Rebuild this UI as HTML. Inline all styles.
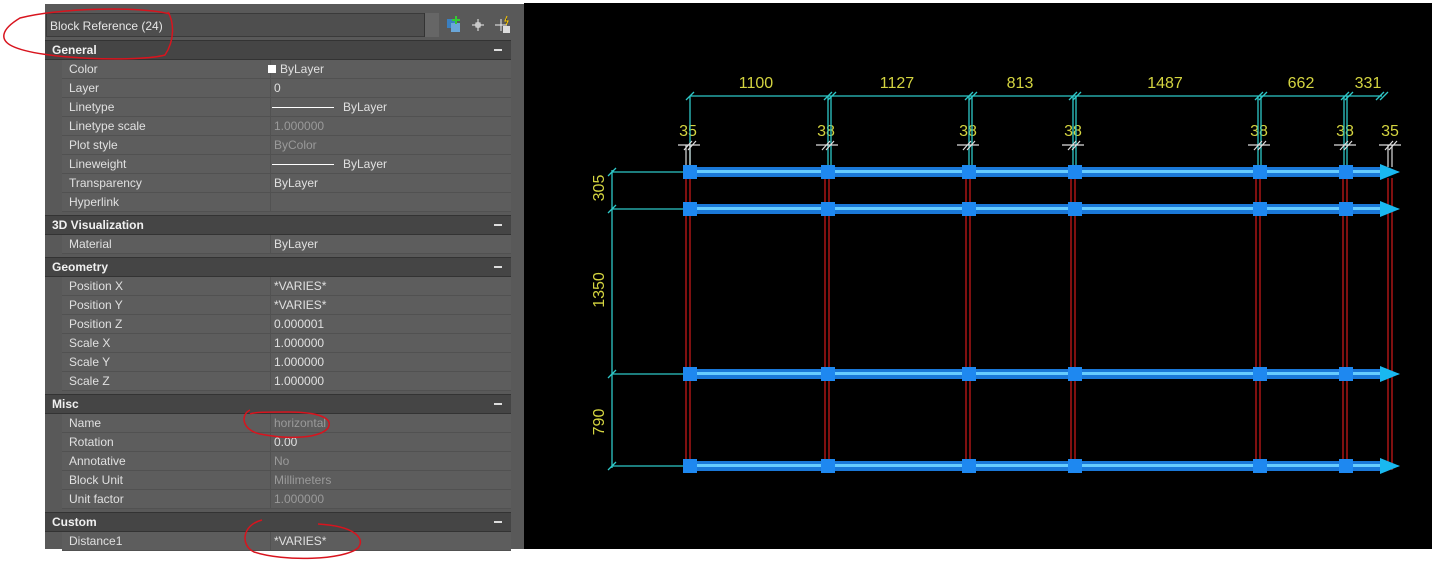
<!DOCTYPE html><html><head><style>
body{margin:0;width:1432px;height:562px;background:#fff;position:relative;overflow:hidden;font-family:"Liberation Sans",sans-serif;}
#panel{position:absolute;left:45px;top:4px;width:479px;height:545px;background:#595959;}
.cb{position:absolute;left:1px;top:9px;width:392px;height:24px;background:#4e4e4e;border:1px solid #3a3a3a;color:#e6e6e6;font-size:12px;line-height:24px;padding-left:3px;box-sizing:border-box;}
.dd{position:absolute;left:379px;top:9px;width:14px;height:24px;background:#666;border-left:1px solid #333;}
.h{position:absolute;left:0;width:466px;height:20px;background:#454545;border-top:1px solid #333;border-bottom:1px solid #333;box-sizing:border-box;color:#f0f0f0;font-weight:bold;font-size:12px;line-height:18px;padding-left:7px;}
.h:after{content:"";position:absolute;right:9px;top:8px;width:8px;height:2px;background:#ddd;}
.r{position:absolute;left:17px;width:449px;height:19px;border-bottom:1px solid #515151;box-sizing:border-box;font-size:12px;line-height:19px;color:#e0e0e0;background:#5d5d5d;}
.r span{position:absolute;left:7px;}
.r b{font-weight:normal;position:absolute;left:212px;}
.r i{position:absolute;left:208px;top:0;bottom:0;border-left:1px solid #525252;}
.g{color:#9a9a9a!important;}
#cad{position:absolute;left:524px;top:3px;width:908px;height:546px;background:#000;}
</style></head><body>
<div id="panel">
<div class="cb">Block Reference (24)</div><div class="dd"></div>
<svg style="position:absolute;left:400px;top:10px" width="70" height="22"><rect x="2" y="5" width="9" height="9" fill="#3a7fc0"/><rect x="6" y="9" width="9" height="9" fill="#6aa6d8"/><path d="M11 2v8M7 6h8" stroke="#3c3" stroke-width="2"/><path d="M27 11h12M33 5v12" stroke="#eee"/><rect x="31" y="9" width="4" height="4" fill="none" stroke="#eee"/><path d="M50 11h12M56 5v12" stroke="#eee"/><rect x="58" y="12" width="7" height="7" fill="#ddd"/><path d="M62 2l-2 5h3l-2 4" stroke="#fc0"/></svg>
<div class="h" style="top:36px">General</div>
<div class="r" style="top:56px"><span>Color</span><i></i><b style="left:218px">ByLayer</b><div style="position:absolute;left:206px;top:5px;width:8px;height:8px;background:#fff"></div></div>
<div class="r" style="top:75px"><span>Layer</span><i></i><b>0</b></div>
<div class="r" style="top:94px"><span>Linetype</span><i></i><b style="left:281px">ByLayer</b><div style="position:absolute;left:210px;top:9px;width:62px;height:1px;background:#fff"></div></div>
<div class="r" style="top:113px"><span>Linetype scale</span><i></i><b class="g">1.000000</b></div>
<div class="r" style="top:132px"><span>Plot style</span><i></i><b class="g">ByColor</b></div>
<div class="r" style="top:151px"><span>Lineweight</span><i></i><b style="left:281px">ByLayer</b><div style="position:absolute;left:210px;top:9px;width:62px;height:1px;background:#fff"></div></div>
<div class="r" style="top:170px"><span>Transparency</span><i></i><b>ByLayer</b></div>
<div class="r" style="top:189px"><span>Hyperlink</span><i></i></div>
<div class="h" style="top:211px">3D Visualization</div>
<div class="r" style="top:231px"><span>Material</span><i></i><b>ByLayer</b></div>
<div class="h" style="top:253px">Geometry</div>
<div class="r" style="top:273px"><span>Position X</span><i></i><b>*VARIES*</b></div>
<div class="r" style="top:292px"><span>Position Y</span><i></i><b>*VARIES*</b></div>
<div class="r" style="top:311px"><span>Position Z</span><i></i><b>0.000001</b></div>
<div class="r" style="top:330px"><span>Scale X</span><i></i><b>1.000000</b></div>
<div class="r" style="top:349px"><span>Scale Y</span><i></i><b>1.000000</b></div>
<div class="r" style="top:368px"><span>Scale Z</span><i></i><b>1.000000</b></div>
<div class="h" style="top:390px">Misc</div>
<div class="r" style="top:410px"><span>Name</span><i></i><b class="g">horizontal</b></div>
<div class="r" style="top:429px"><span>Rotation</span><i></i><b>0.00</b></div>
<div class="r" style="top:448px"><span>Annotative</span><i></i><b class="g">No</b></div>
<div class="r" style="top:467px"><span>Block Unit</span><i></i><b class="g">Millimeters</b></div>
<div class="r" style="top:486px"><span>Unit factor</span><i></i><b class="g">1.000000</b></div>
<div class="h" style="top:508px">Custom</div>
<div class="r" style="top:528px"><span>Distance1</span><i></i><b>*VARIES*</b></div>
</div>
<div id="cad"></div>
<svg style="position:absolute;left:0;top:0" width="1432" height="562">
<g font-family="Liberation Sans,sans-serif" font-size="16" fill="#d4d440" text-anchor="middle">
<text x="756" y="88">1100</text><text x="897" y="88">1127</text><text x="1020" y="88">813</text><text x="1165" y="88">1487</text><text x="1301" y="88">662</text><text x="1368" y="88">331</text>
<text x="688" y="136">35</text><text x="826" y="136">38</text><text x="968" y="136">38</text><text x="1073" y="136">38</text><text x="1259" y="136">38</text><text x="1345" y="136">38</text><text x="1390" y="136">35</text>
<text transform="translate(604,188) rotate(-90)">305</text><text transform="translate(604,290) rotate(-90)">1350</text><text transform="translate(604,422) rotate(-90)">790</text>
</g>
<g stroke="#2ec8c8" stroke-width="1.3" fill="none">
<path d="M690 96H1382M612 170V468"/>
<path d="M690 96V166M828 96V166M831 96V166M969 96V166M972 96V166M1073 96V166M1076 96V166M1258 96V166M1261 96V166M1344 96V166M1347 96V166"/>
<path d="M686 100l8-8M824 100l8-8M828 100l8-8M965 100l8-8M969 100l8-8M1069 100l8-8M1073 100l8-8M1255 100l8-8M1259 100l8-8M1341 100l8-8M1345 100l8-8M1376 100l8-8M1380 100l8-8"/>
<path d="M612 172H683M612 209H683M612 374H683M612 466H683M608 176l8-8M608 213l8-8M608 378l8-8M608 470l8-8"/>
</g>
<g stroke="#ddd" stroke-width="1.2"><path d="M678 145h22M816 145h22M957 145h22M1062 145h22M1248 145h22M1334 145h22M1379 145h22"/>
<path d="M684 150l8-9M688 150l8-9M822 150l8-9M826 150l8-9M963 150l8-9M967 150l8-9M1068 150l8-9M1072 150l8-9M1254 150l8-9M1258 150l8-9M1340 150l8-9M1344 150l8-9M1385 150l8-9M1389 150l8-9M1388 145v22M1392 145v22M686 145v22M690 145v22"/></g>
<g stroke="#c41a1a" stroke-width="1.3"><path d="M686 178V470M690 178V470M825 178V470M829 178V470M966 178V470M970 178V470M1071 178V470M1075 178V470M1256 178V470M1260 178V470M1343 178V470M1347 178V470M1388 178V470M1392 178V470"/></g>
<g id="row">
<rect x="690" y="167" width="692" height="10" fill="#1a78d8"/><rect x="690" y="170" width="692" height="3" fill="#66ccff"/>
<path d="M1380 164l20 8-20 8z" fill="#19b8f0"/>
<g fill="#1e88f0"><rect x="683" y="165" width="14" height="14"/><rect x="821" y="165" width="14" height="14"/><rect x="962" y="165" width="14" height="14"/><rect x="1068" y="165" width="14" height="14"/><rect x="1253" y="165" width="14" height="14"/><rect x="1339" y="165" width="14" height="14"/></g>
</g>
<use href="#row" y="37"/><use href="#row" y="202"/><use href="#row" y="294"/>
<g stroke="#d8141e" stroke-width="1.5" fill="none">
<path d="M170 14C140 6 60 8 20 18 0 30 0 40 12 46 40 60 140 62 165 55 175 40 174 22 168 12"/>
<path d="M250 410c-10 5 -8 20 10 24 30 6 60 4 68-6 6-10-10-16-40-16-20 0-34 0-38 2"/>
<path d="M262 520c-20 5-22 25-8 32 30 10 90 8 104-4 8-10-4-22-40-24"/>
</g>
</svg>
</body></html>
